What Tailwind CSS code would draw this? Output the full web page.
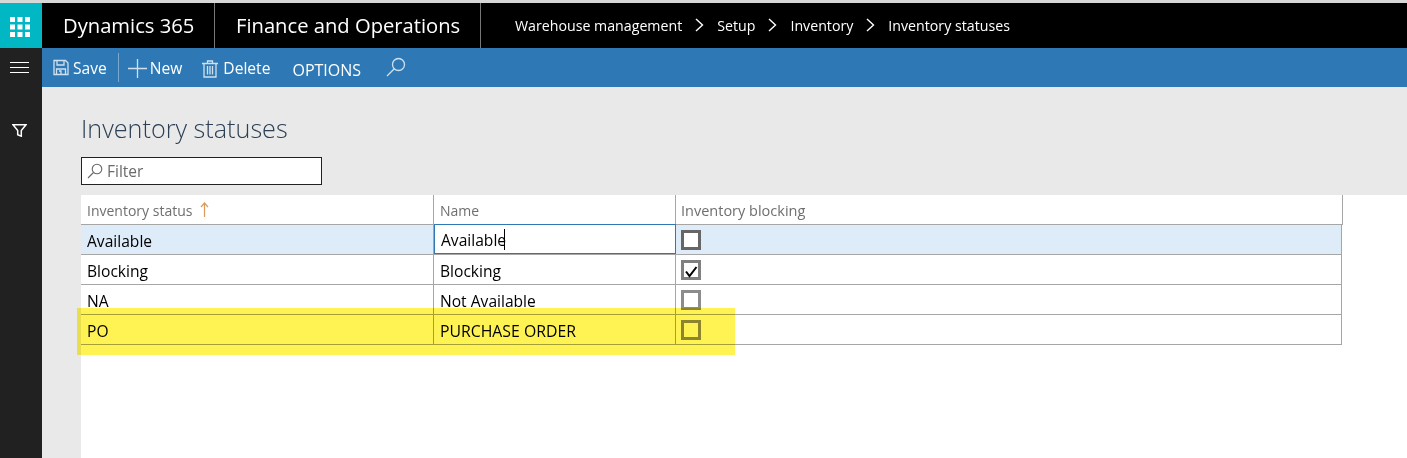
<!DOCTYPE html>
<html>
<head>
<meta charset="utf-8">
<script src="https://cdn.jsdelivr.net/npm/@tailwindcss/browser@4"></script>
</head>
<body class="m-0 overflow-hidden bg-white">
<div class="relative w-[1407px] h-[458px] overflow-hidden flex flex-col font-['Open_Sans','Noto_Sans',sans-serif] text-[#111]">
  <div class="h-[3px] bg-[#d8d8d8] shrink-0"></div>
  <header class="h-[45px] shrink-0 bg-black text-white flex items-center">
    <div class="w-[42px] h-full bg-[#00b7c3] flex items-center pl-[10px] pt-[3px]">
      <svg width="20" height="20" viewBox="0 0 20 20" fill="#fff"><rect x="0" y="0" width="5" height="5"/><rect x="7.5" y="0" width="5" height="5"/><rect x="15" y="0" width="5" height="5"/><rect x="0" y="7.5" width="5" height="5"/><rect x="7.5" y="7.5" width="5" height="5"/><rect x="15" y="7.5" width="5" height="5"/><rect x="0" y="15" width="5" height="5"/><rect x="7.5" y="15" width="5" height="5"/><rect x="15" y="15" width="5" height="5"/></svg>
    </div>
    <div class="w-[173px] h-full border-r border-[#777] flex items-center pl-[21px] text-[20.2px] whitespace-nowrap">Dynamics 365</div>
    <div class="w-[266px] h-full border-r border-[#777] flex items-center pl-[21px] text-[20.2px] whitespace-nowrap">Finance and Operations</div>
    <nav class="flex items-center pl-[34px] text-[14.2px] whitespace-nowrap">
      <span>Warehouse management</span>
      <svg class="mx-[13px]" width="9" height="14" viewBox="0 0 9 14" fill="none" stroke="#fff" stroke-width="1.4"><path d="M1 1l6.5 6L1 13"/></svg>
      <span>Setup</span>
      <svg class="mx-[13px]" width="9" height="14" viewBox="0 0 9 14" fill="none" stroke="#fff" stroke-width="1.4"><path d="M1 1l6.5 6L1 13"/></svg>
      <span>Inventory</span>
      <svg class="mx-[13px]" width="9" height="14" viewBox="0 0 9 14" fill="none" stroke="#fff" stroke-width="1.4"><path d="M1 1l6.5 6L1 13"/></svg>
      <span>Inventory statuses</span>
    </nav>
  </header>
  <div class="flex flex-1 min-h-0">
    <aside class="w-[42px] shrink-0 bg-[#212121] flex flex-col items-start pl-[10px]">
      <svg class="mt-[14px]" width="19" height="11" viewBox="0 0 19 11" stroke="#fff" stroke-width="1"><path d="M0 .5h19M0 5.500h19M0 10.500h19"/></svg>
      <svg class="mt-[51px] ml-[2px]" width="15" height="13" viewBox="0 0 15 13" fill="none" stroke="#fff" stroke-width="1.5"><path d="M1 .8h13L9.300 6.500v5.700l-3.600-1.500V6.500z"/></svg>
    </aside>
    <div class="flex-1 flex flex-col min-w-0">
      <div class="h-[39px] shrink-0 bg-[#2e79b5] text-white flex items-center text-[15.6px] whitespace-nowrap">
        <svg class="ml-[11px]" width="16" height="17" viewBox="0 0 16 17" fill="none" stroke="#cfe0ee" stroke-width="1.3"><path d="M1 1.500h11.500L15 4v11.500H1z"/><path d="M4 1.500v4.500h7V1.500M3.500 15.500V10h9v5.500M6 12h2v3.500"/></svg>
        <span class="ml-[4px] mt-[2px]">Save</span>
        <span class="ml-[11px] w-px h-[29px] bg-[#7ba8cd]"></span>
        <svg class="ml-[9px] mt-[2px]" width="19" height="19" viewBox="0 0 19 19" stroke="#cfe0ee" stroke-width="1.3"><path d="M0 9.500h19M9.500 0v19"/></svg>
        <span class="ml-[3px] mt-[2px]">New</span>
        <svg class="ml-[20px] mt-[2px]" width="16" height="18" viewBox="0 0 16 18" fill="none" stroke="#cfe0ee" stroke-width="1.3"><path d="M0 3.500h16M5.500 3.500V1h5v2.500M2 3.500V17h12V3.500M5.500 6v8.500M8 6v8.500M10.500 6v8.500"/></svg>
        <span class="ml-[5px] mt-[2px]">Delete</span>
        <span class="ml-[22px] mt-[5px] text-[16px]">OPTIONS</span>
        <svg class="ml-[25px] -mt-[1px]" width="20" height="20" viewBox="0 0 20 20" fill="none" stroke="#cfe0ee" stroke-width="1.300"><circle cx="12.500" cy="7.500" r="6"/><path d="M8.300 11.800L1 19"/></svg>
      </div>
      <div class="h-[108px] shrink-0 bg-[#e9e9e9] pl-[39px] pt-[23px]">
        <h1 class="text-[25.2px] leading-[36px] text-[#2b3f55] font-light whitespace-nowrap">Inventory statuses</h1>
        <div class="mt-[11px] w-[241px] h-[28px] bg-white border border-[#222] flex items-center pl-[5px]">
          <svg width="16" height="16" viewBox="0 0 16 16" fill="none" stroke="#666" stroke-width="1.100"><circle cx="10" cy="6" r="4.800"/><path d="M6.500 9.500L1 15"/></svg>
          <span class="ml-[4px] mt-[2px] text-[15.5px] text-[#6b6b6b]">Filter</span>
        </div>
      </div>
      <div class="flex-1 flex min-h-0">
        <div class="w-[39px] shrink-0 bg-[#e9e9e9]"></div>
        <div class="flex-1 bg-white">
          <div class="w-[1262px] text-[15.6px] leading-none text-black">
            <div class="h-[30px] flex border-b border-[#a6a6a6] text-[14px] text-[#6f6f6f]">
              <div class="w-[353px] flex items-center pl-[6px] border-r border-[#a6a6a6]"><span class="mt-[3px]">Inventory status</span>
                <svg class="ml-[8px] mt-[0px]" width="9" height="15" viewBox="0 0 9 15" fill="none" stroke="#d99a5b" stroke-width="1.200"><path d="M4.500 15V1M1 5l3.500-4L8 5"/></svg>
              </div>
              <div class="w-[242px] flex items-center pl-[6px] border-r border-[#a6a6a6]"><span class="mt-[3px]">Name</span></div>
              <div class="flex-1 flex items-center pl-[5px] border-r border-[#a6a6a6]"><span class="mt-[3px] text-[14.5px]">Inventory blocking</span></div>
            </div>
            <div class="w-[1261px] h-[30px] flex border-b border-[#a6a6a6] border-r bg-[#deebf8]">
              <div class="w-[353px] flex items-center pl-[6px] border-r border-[#a6a6a6]"><span class="mt-[4px]">Available</span></div>
              <div class="w-[242px] flex items-center pl-[6px] bg-white border border-[#2e79b5] -mt-px"><span class="mt-[4px]">Available</span><span class="w-px h-[21px] bg-black -ml-[2px]"></span></div>
              <div class="flex-1 flex items-center pl-[5px]"><span class="w-[20px] h-[20px] border-[3px] border-[#666] bg-white"></span></div>
            </div>
            <div class="w-[1261px] h-[30px] flex border-b border-[#a6a6a6] border-r">
              <div class="w-[353px] flex items-center pl-[6px] border-r border-[#a6a6a6]"><span class="mt-[4px]">Blocking</span></div>
              <div class="w-[242px] flex items-center pl-[6px] border-r border-[#a6a6a6]"><span class="mt-[4px]">Blocking</span></div>
              <div class="flex-1 flex items-center pl-[5px]"><span class="w-[20px] h-[20px] border-[3px] border-[#808080] bg-white relative"><svg class="absolute left-[0px] top-[1px]" width="15" height="15" viewBox="0 0 15 15" fill="none" stroke="#000" stroke-width="2"><path d="M2 7.500l3.500 4.500L12.500 3"/></svg></span></div>
            </div>
            <div class="w-[1261px] h-[30px] flex border-b border-[#a6a6a6] border-r">
              <div class="w-[353px] flex items-center pl-[6px] border-r border-[#a6a6a6]"><span class="mt-[4px]">NA</span></div>
              <div class="w-[242px] flex items-center pl-[6px] border-r border-[#a6a6a6]"><span class="mt-[4px]">Not Available</span></div>
              <div class="flex-1 flex items-center pl-[5px]"><span class="w-[20px] h-[20px] border-[3px] border-[#8c8c8c] bg-white"></span></div>
            </div>
            <div class="w-[1261px] h-[30px] flex border-b border-[#a6a6a6] border-r">
              <div class="w-[353px] flex items-center pl-[6px] border-r border-[#a6a6a6]"><span class="mt-[4px]">PO</span></div>
              <div class="w-[242px] flex items-center pl-[6px] border-r border-[#a6a6a6]"><span class="mt-[4px] text-[15.8px]">PURCHASE ORDER</span></div>
              <div class="flex-1 flex items-center pl-[5px]"><span class="w-[20px] h-[20px] border-[3px] border-[#8c8c8c] bg-white"></span></div>
            </div>
          </div>
        </div>
      </div>
    </div>
  </div>
  <div class="absolute left-[77px] top-[308px] w-[658px] h-[47px] bg-[#fff354] mix-blend-multiply"></div>
</div>
</body>
</html>
